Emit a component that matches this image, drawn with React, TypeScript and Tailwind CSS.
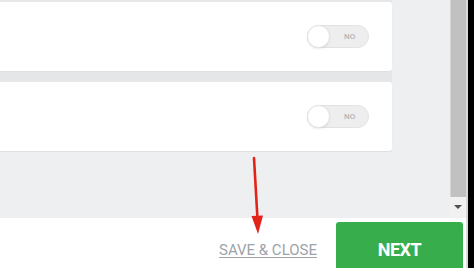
import React from "react";

function Toggle() {
  return (
    <div className="relative w-[62px] h-[23px] rounded-full bg-[#eeeeee] border border-[#e2e2e2] flex items-center">
      <div className="absolute left-[-1px] top-[-1px] w-[23px] h-[23px] rounded-full bg-white border border-[#e4e4e4] shadow-[0_1px_2px_rgba(0,0,0,0.08)]" />
      <span className="ml-[36px] text-[8px] leading-none text-[#b3b3b3] font-medium">
        NO
      </span>
    </div>
  );
}

function Card() {
  return (
    <div className="w-[392px] h-[69px] bg-white rounded-r-[3px] flex items-center justify-end pr-[23px] shadow-[0_1px_2px_rgba(0,0,0,0.04)]">
      <Toggle />
    </div>
  );
}

export default function App() {
  return (
    <div className="relative w-[474px] h-[268px] overflow-hidden flex bg-black" style={{ fontFamily: "Roboto, 'Liberation Sans', sans-serif" }}>
      <div className="w-[466px] shrink-0 h-full flex flex-col">
        <div className="h-[218px] shrink-0 flex">
          <div className="w-[450px] shrink-0 h-full bg-[#eeeff1] flex flex-col">
            <div className="w-[392px] bg-[#e6e7e9] pt-[2px] flex flex-col gap-[11px] pb-[1px]">
              <Card />
              <Card />
            </div>
          </div>
          <div className="w-[16px] shrink-0 h-full bg-[#f1f1f1] flex flex-col items-center">
            <div className="w-[16px] h-[197px] bg-[#c1c1c1] border-l border-[#d4d4d4]" />
            <div className="mt-[8px] w-0 h-0 border-l-[4px] border-r-[4px] border-t-[4px] border-l-transparent border-r-transparent border-t-[#505050]" />
          </div>
        </div>
        <div className="flex-1 bg-white flex items-start justify-end pr-[3px] pt-[4px]">
          <span className="mt-[19px] mr-[19px] text-[15px] leading-[18px] text-[#9ea3a8] underline underline-offset-[2px]">
            SAVE &amp; CLOSE
          </span>
          <div className="w-[127px] h-[52px] shrink-0 bg-[#37ae4b] rounded-[3px] flex items-center justify-center pt-[2px]">
            <span className="text-white text-[18px] font-bold tracking-[-0.5px]">NEXT</span>
          </div>
        </div>
      </div>
      <div className="w-[2px] shrink-0 h-full bg-[#d9d9d9]" />
      <div className="flex-1 h-full bg-black" />
      <svg className="absolute left-0 top-0" width="474" height="268" viewBox="0 0 474 268">
        <line x1="254" y1="158" x2="257.5" y2="219" stroke="#e2231a" strokeWidth="2.6" strokeLinecap="round" />
        <polygon points="251.5,216 263,215.5 258,234" fill="#e2231a" />
      </svg>
    </div>
  );
}
